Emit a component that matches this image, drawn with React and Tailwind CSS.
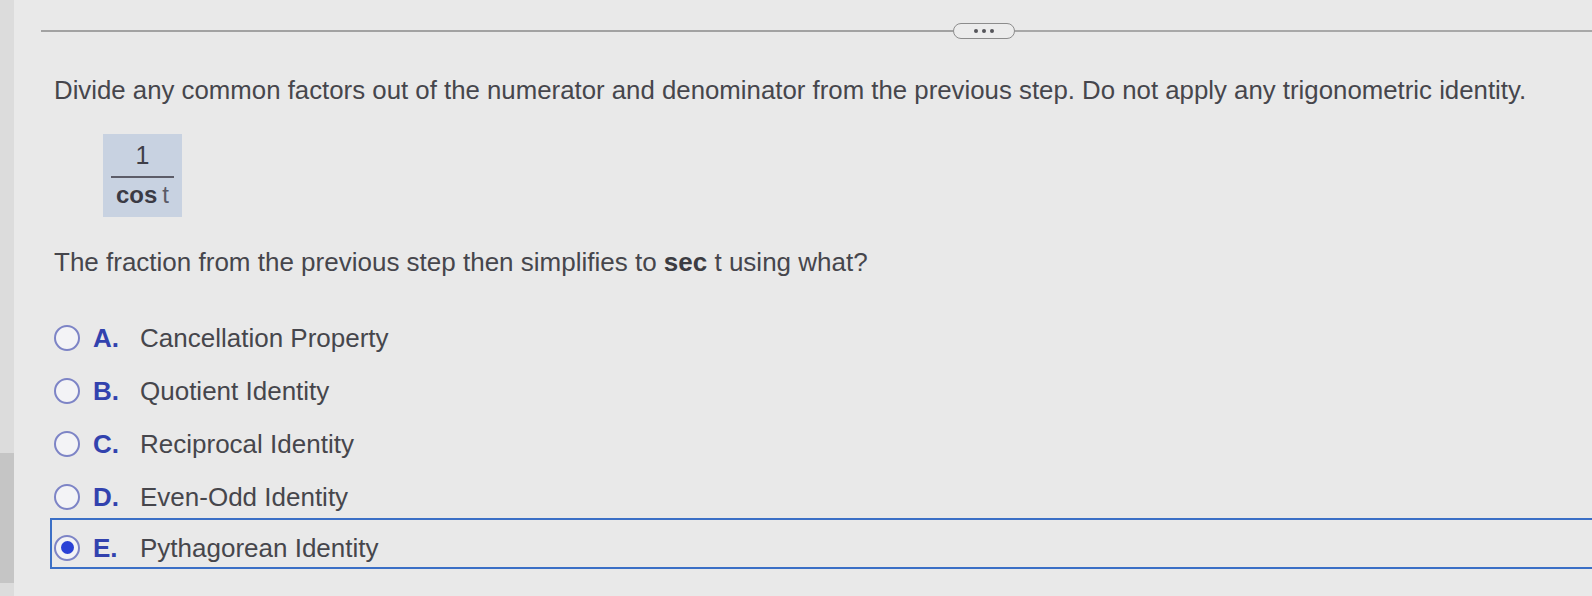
import React from 'react';

const options = [
  { key: 'A', label: 'Cancellation Property' },
  { key: 'B', label: 'Quotient Identity' },
  { key: 'C', label: 'Reciprocal Identity' },
  { key: 'D', label: 'Even-Odd Identity' },
  { key: 'E', label: 'Pythagorean Identity' },
];

const Radio = ({ checked }) => (
  <span className="w-[26px] h-[26px] rounded-full border-[2.5px] border-[#7d84c6] bg-[#f3f3f6] flex items-center justify-center flex-shrink-0">
    {checked && <span className="w-[13px] h-[13px] rounded-full bg-[#2b42d6]" />}
  </span>
);

const OptionRow = ({ opt, selected }) => (
  <div
    className={`ml-[36px] pl-[2px] flex items-center border-2 border-r-0 ${
      selected ? 'border-[#3b6fc6] h-[51px] mt-[-5px] pt-[8px]' : 'border-transparent h-[53px]'
    }`}
  >
    <Radio checked={selected} />
    <span className="ml-[13px] w-[47px] font-bold text-[#3242ae]">{opt.key}.</span>
    <span className="text-[#46464c]">{opt.label}</span>
  </div>
);

export default function App() {
  const selected = 'E';
  return (
    <div
      className="w-[1592px] h-[596px] flex overflow-hidden bg-[#e9e9e9] text-[26px] leading-[30px]"
      style={{ fontFamily: '"Liberation Sans", Arial, sans-serif' }}
    >
      <div className="w-[14px] flex flex-col flex-shrink-0">
        <div className="h-[453px] bg-[#dcdcdc]" />
        <div className="h-[130px] bg-[#c5c5c5]" />
        <div className="flex-1 bg-[#dcdcdc]" />
      </div>

      <main className="flex-1 flex flex-col">
        <div className="mt-[23px] ml-[27px] h-[16px] flex items-center">
          <div className="w-[912px] h-[2px] bg-[#a2a2a2]" />
          <div className="w-[62px] h-[16px] rounded-full border-[1.5px] border-[#8c8c8c] bg-[#ececec] flex items-center justify-center gap-[4px]">
            <span className="w-[4px] h-[4px] rounded-full bg-[#55555a]" />
            <span className="w-[4px] h-[4px] rounded-full bg-[#55555a]" />
            <span className="w-[4px] h-[4px] rounded-full bg-[#55555a]" />
          </div>
          <div className="flex-1 h-[2px] bg-[#a8a8a8]" />
        </div>

        <div className="pl-[40px] text-[#46464c]">
          <p className="mt-[36px] text-[25.8px]">
            Divide any common factors out of the numerator and denominator from the previous step. Do not apply any trigonometric identity.
          </p>

          <div className="mt-[29px] ml-[49px] w-[79px] h-[83px] bg-[#c8d2e1] flex flex-col items-center pt-[7px]">
            <span className="text-[25px] leading-[28px] text-[#3e3e48]">1</span>
            <span className="mt-[7px] w-[63px] h-[2px] bg-[#5c5c68]" />
            <span className="mt-[3px] text-[24px] leading-[28px]">
              <span className="font-semibold text-[#3a3a44]">cos</span>
              <span className="ml-[5px] text-[#5a5a66]">t</span>
            </span>
          </div>

          <p className="mt-[30px]">
            The fraction from the previous step then simplifies to <span className="font-bold text-[#3c3c42]">sec</span> t using what?
          </p>
        </div>

        <div className="mt-[34px] flex flex-col">
          {options.map((o) => (
            <OptionRow key={o.key} opt={o} selected={o.key === selected} />
          ))}
        </div>
      </main>
    </div>
  );
}
